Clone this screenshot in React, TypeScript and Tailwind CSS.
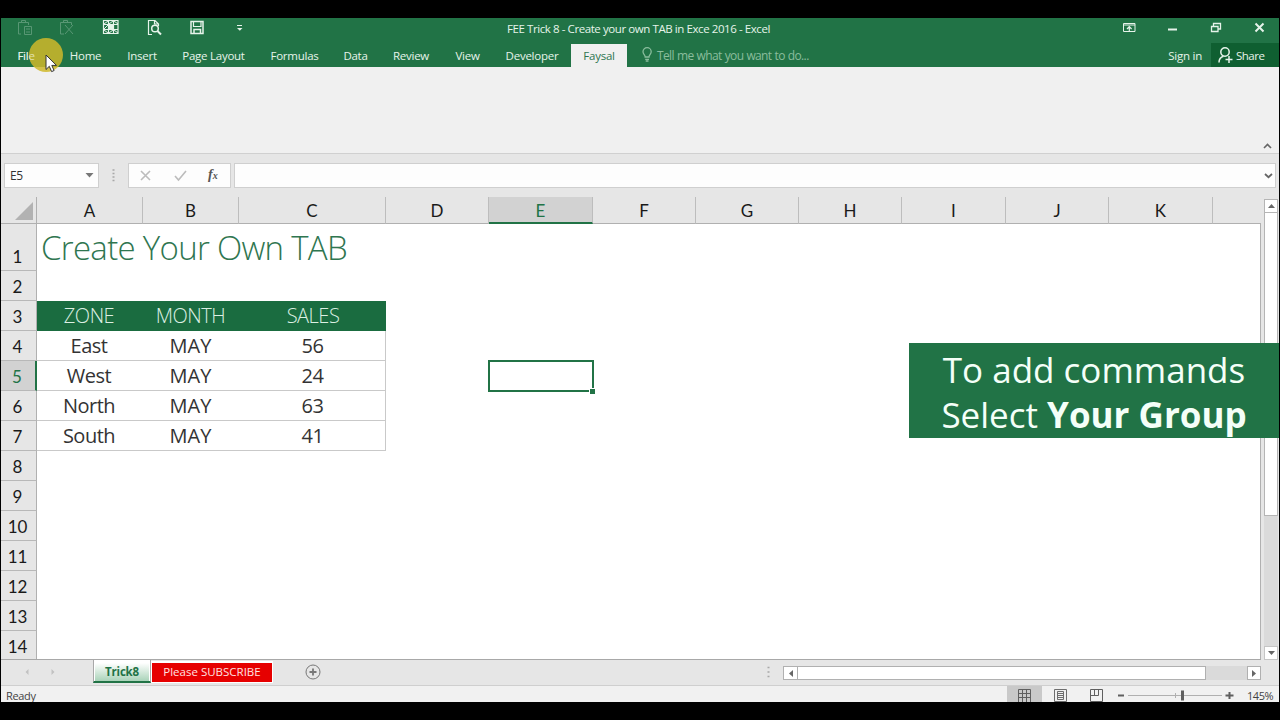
import { clsx } from "clsx";

const tabs = [
  { name: "Home", className: "w-[59px]" },
  { name: "Insert", className: "w-[54px]" },
  { name: "Page Layout", className: "w-[89px]" },
  { name: "Formulas", className: "w-[73px]" },
  { name: "Data", className: "w-[49px]" },
  { name: "Review", className: "w-[62px]" },
  { name: "View", className: "w-[51px]" },
  { name: "Developer", className: "w-[78px]" },
];

const columns = [
  { name: "A", className: "w-[106px]" },
  { name: "B", className: "w-[96px]" },
  { name: "C", className: "w-[147px]" },
  { name: "D", className: "w-[103px]" },
  { name: "E", className: "w-[104px]" },
  { name: "F", className: "w-[103px]" },
  { name: "G", className: "w-[103px]" },
  { name: "H", className: "w-[103px]" },
  { name: "I", className: "w-[104px]" },
  { name: "J", className: "w-[103px]" },
  { name: "K", className: "w-[104px]" },
];

const sales = [
  ["East", "MAY", "56"],
  ["West", "MAY", "24"],
  ["North", "MAY", "63"],
  ["South", "MAY", "41"],
];

function TitleBar() {
  return (
    <div className="relative flex h-[25px] shrink-0 items-start text-[#e6f3ea]">
      <svg width="260" height="25" viewBox="1 18 260 25" fill="none" stroke="currentColor">
        <g opacity="0.28">
          <path d="M21 34h-2.500V22.500h10V25M21.500 22.500v-2h4v2M24.500 26.500h7v8h-7z M26 29h4M26 32h4" />
          <path d="M64 34h-3.500V22.500h11V25M63.500 22.500v-2h4v2M65 25l8 9M73 25l-8 9" />
        </g>
        <path d="M103.500 20.500h14.500v13h-14.500zM103.500 24.500h14.500M103.500 29.500h14.500M108.500 20.500v13M113.500 20.500v13" strokeWidth="1.200" />
        <path d="M104 24l4-3M109 24l4-3M114 21l4 3M104 29l4-4M104 30l4 3M109 33l4-3M114 30l4 3" />
        <path d="M109 25h4.500v4H109z" fill="currentColor" />
        <path d="M152 34.500h-3.500v-14h6.500l3.500 3.500v2M154.500 20.500v3.500h4" strokeWidth="1.200" />
        <circle cx="155" cy="28.500" r="3.300" strokeWidth="1.500" />
        <path d="M157.500 31l3.500 3.500" strokeWidth="2" />
        <path d="M191 21.500h12v12h-12z" strokeWidth="1.500" />
        <path d="M193.500 22v4.500h7.500V22" strokeWidth="1.200" />
        <path d="M194 33.500v-4h6.500v4" strokeWidth="1.500" />
        <path d="M237 25.500h5" />
        <path d="M237 28h5.500l-2.700 2.800z" fill="currentColor" stroke="none" />
      </svg>
      <div className="w-[755px] pt-[3px] text-center text-[11.5px] leading-4 tracking-[-0.42px]">
        FEE Trick 8 - Create your own TAB in Exce 2016 - Excel
      </div>
      <svg className="ml-auto" width="160" height="25" viewBox="1119 18 160 25" fill="none" stroke="currentColor">
        <path d="M1123.500 23.500h11.500v8h-11.500zM1123.500 25h11.500" />
        <path d="M1129.300 31v-4M1127 29l2.300-2.300 2.300 2.300" strokeWidth="1.200" />
        <path d="M1168 29.500h9" strokeWidth="2" />
        <path d="M1211.500 26.500h6.500v5h-6.500zM1213.500 26v-2.500h7v5.500h-2.500" strokeWidth="1.300" />
        <path d="M1255.500 23.500l8 8M1263.500 23.500l-8 8" strokeWidth="2" />
      </svg>
    </div>
  );
}

function RibbonTabs() {
  return (
    <div className="relative flex h-[24px] shrink-0 text-[11.5px] leading-[25px] tracking-[-0.25px] text-[#e6f3ea]">
      <div className="mr-[5px] w-[50px] text-center">File</div>
      {tabs.map((tab) => (
        <div key={tab.name} className={clsx("whitespace-nowrap text-center", tab.className)}>
          {tab.name}
        </div>
      ))}
      <div className="mt-px h-[23px] w-[56px] bg-[#f0f0f0] text-center leading-[23px] text-[#2e7650]">Faysal</div>
      <svg className="ml-[13px] mt-[4px]" width="14" height="16" viewBox="0 0 14 16" fill="none" stroke="#8abd9d" strokeWidth="1.300">
        <path d="M5.200 10c0-2-2.200-2.700-2.200-5.200a4.100 4.100 0 0 1 8.200 0C11.200 7.300 9 8 9 10zM5.200 12.300H9M5.700 14h2.800" />
      </svg>
      <div className="ml-[3px] whitespace-nowrap tracking-[-0.62px] text-[#8abd9d] [word-spacing:0.5px] text-[12px]">Tell me what you want to do...</div>
      <div className="ml-auto mr-[9px]">Sign in</div>
      <div className="flex w-[68px] bg-[#0f5f31] pl-[7px] tracking-[-0.5px]">
        <svg className="mr-[3px] mt-[4px]" width="15" height="17" viewBox="0 0 15 17" fill="none" stroke="currentColor" strokeWidth="1.500">
          <circle cx="7" cy="5" r="4.200" />
          <path d="M1 15.500c0-3.500 2-5.500 4.500-6.300M7.500 12.500h7M11 9v7" />
        </svg>
        Share
      </div>
      {/* click highlight and pointer */}
      <div className="absolute left-[28px] top-[-5px] h-[34px] w-[34px] rounded-full bg-[#cfb92a]/85" />
      <div className="absolute left-0 top-0 w-[50px] text-center text-[#e6f3ea]/60">File</div>
      <svg className="absolute left-[44px] top-[11px]" width="14" height="20" viewBox="0 0 14 20">
        <path d="M1 1v14.500l3.300-3.200 2.300 5.300 2.500-1.100-2.300-5.100h4.700z" fill="#fff" stroke="#333" />
      </svg>
    </div>
  );
}

function FormulaBar() {
  return (
    <div className="flex h-[43px] shrink-0 bg-[#e6e6e6] pl-[3px] pt-[9px] text-[12px] text-[#333]">
      <div className="flex h-[25px] w-[95px] items-center justify-between border border-[#cfcfcf] bg-[#fdfdfd] pl-[5px] pr-[4px]">
        <span className="pt-px tracking-[-0.3px]">E5</span>
        <svg width="9" height="5" viewBox="0 0 9 5">
          <path d="M0.500 0h8L4.500 4.500z" fill="#777" />
        </svg>
      </div>
      <svg className="mx-[13px] mt-[6px]" width="3" height="13" viewBox="0 0 3 13">
        <path d="M0.500 1h2M0.500 4.500h2M0.500 8h2M0.500 11.500h2" stroke="#a8a8a8" strokeWidth="1.500" />
      </svg>
      <div className="flex h-[25px] w-[103px] border border-[#cfcfcf] bg-[#fdfdfd]">
        <svg width="75" height="23" viewBox="0 0 75 23" fill="none" stroke="#bcbcbc" strokeWidth="1.600">
          <path d="M12 7l9 9M21 7l-9 9M46 12l3.500 4L57 7" />
        </svg>
        <span className="ml-[4px] font-['Liberation_Serif',serif] text-[14px] font-bold italic leading-[22px] text-[#555]">
          f<span className="text-[10px]">x</span>
        </span>
      </div>
      <div className="ml-[3px] flex h-[25px] w-[1042px] items-center justify-end border border-[#cfcfcf] bg-[#fdfdfd] pr-[2px]">
        <svg width="9" height="6" viewBox="0 0 9 6" fill="none" stroke="#666" strokeWidth="1.800">
          <path d="M1 1l3.500 3.200L8 1" />
        </svg>
      </div>
    </div>
  );
}

function ColumnHeaders() {
  return (
    <div className="flex h-[27px] bg-[#e6e6e6] font-['Lato',sans-serif] text-[17px] leading-[28px] text-[#1a1a1a]">
      <div className="flex w-[36px] items-end justify-end border-b border-r border-[#b0b0b0] pb-[3px] pr-[3px]">
        <svg width="18" height="18" viewBox="0 0 18 18">
          <path d="M18 0v18H0z" fill="#b2b2b2" />
        </svg>
      </div>
      {columns.map((col) => (
        <div
          key={col.name}
          className={clsx(
            "border-r text-center",
            col.className,
            col.name === "E"
              ? "border-b-2 border-b-[#217346] border-r-[#bdbdbd] bg-[#d2d2d2] text-[#217346]"
              : "border-b border-b-[#b0b0b0] border-r-[#bdbdbd]"
          )}
        >
          {col.name}
        </div>
      ))}
      <div className="grow border-b border-[#b0b0b0]" />
    </div>
  );
}

function RowHeader({ row }: { row: number }) {
  return (
    <div
      className={clsx(
        "flex w-[36px] shrink-0 justify-center border-b border-[#b8b8b8] pr-[2px] font-['Lato',sans-serif] text-[17px]",
        row === 1 ? "items-end pb-[2px] leading-[22px]" : "items-center pt-[2px]",
        row === 5
          ? "border-r-2 border-r-[#217346] bg-[#d2d2d2] text-[#217346]"
          : "border-r border-r-[#b0b0b0] bg-[#e6e6e6] text-[#1a1a1a]"
      )}
    >
      {row}
    </div>
  );
}

function RowCells({ row }: { row: number }) {
  if (row === 1) {
    return (
      <div className="pl-[4px] text-[33px] font-light leading-[47px] tracking-[-0.7px] text-[#2f7650]">
        Create Your Own TAB
      </div>
    );
  }
  if (row === 3) {
    return (
      <div className="flex bg-[#1a6c40] text-[20px] font-light leading-[30px] tracking-[-0.5px] text-[#dcefe3]">
        <div className="w-[104px] text-center">ZONE</div>
        <div className="w-[99px] text-center">MONTH</div>
        <div className="w-[146px] text-center">SALES</div>
      </div>
    );
  }
  if (row >= 4 && row <= 7) {
    const [zone, month, amount] = sales[row - 4];
    return (
      <>
        <div className="flex border-b border-r border-[#c9c9c9] text-[20px] leading-[30px] text-[#333]">
          <div className="w-[104px] text-center tracking-[-0.5px]">{zone}</div>
          <div className="w-[99px] text-center">{month}</div>
          <div className="w-[145px] text-center tracking-[-0.5px]">{amount}</div>
        </div>
        {row === 5 && (
          <div className="relative ml-[103px] w-[104px]">
            <div className="absolute -left-px -top-px h-[32px] w-[106px] border-2 border-[#217346]" />
            <div className="absolute -right-[2px] top-[27px] h-[6px] w-[6px] border-l border-t border-white bg-[#217346]" />
          </div>
        )}
      </>
    );
  }
  return null;
}

function Sheet() {
  return (
    <div className="flex h-[463px] shrink-0 bg-[#e6e6e6]">
      <div className="flex w-[1260px] flex-col overflow-hidden border-b border-[#a8a8a8]">
        <ColumnHeaders />
        <div className="grow overflow-hidden border-r border-[#b0b0b0] bg-white">
          {Array.from({ length: 14 }, (_, i) => i + 1).map((row) => (
            <div key={row} className={clsx("flex", row === 1 ? "h-[47px]" : "h-[30px]")}>
              <RowHeader row={row} />
              <RowCells row={row} />
            </div>
          ))}
        </div>
      </div>
      <div className="ml-[3px] mt-[2px] flex h-[461px] w-[14px] flex-col bg-[#dadada]">
        <div className="flex h-[14px] items-center justify-center border border-[#b5b5b5] bg-white">
          <svg width="7" height="4" viewBox="0 0 7 4">
            <path d="M0 4h7L3.500 0z" fill="#666" />
          </svg>
        </div>
        <div className="h-[303px] border border-t-0 border-[#b5b5b5] bg-white" />
        <div className="mt-auto flex h-[14px] items-center justify-center border border-[#c5c5c5] bg-white">
          <svg width="7" height="4" viewBox="0 0 7 4">
            <path d="M0 0h7L3.500 4z" fill="#666" />
          </svg>
        </div>
      </div>
    </div>
  );
}

function SheetTabs() {
  return (
    <div className="flex h-[25px] shrink-0 bg-[#e6e6e6] text-[11.5px]">
      <svg width="92" height="25" viewBox="0 0 92 25" fill="#c2c2c2">
        <path d="M27.500 9v6l-3-3zM50.500 9v6l3-3z" />
      </svg>
      <div className="flex h-[23px] w-[58px] border-b-2 border-l border-r border-b-[#217346] border-l-[#a8a8a8] border-r-[#a8a8a8] bg-white px-px pt-[3px]">
        <div className="grow bg-linear-to-b from-white to-[#a9d3b9] text-center text-[11.5px] font-bold leading-[17px] tracking-[-0.2px] text-[#217346]">
          Trick8
        </div>
      </div>
      <div className="mt-px h-[22px] w-[122px] border border-t-2 border-white bg-[#e60000] text-center leading-[18px] text-[#ffe3e0]">
        Please SUBSCRIBE
      </div>
      <svg className="ml-[32px] mt-[4px]" width="16" height="16" viewBox="0 0 16 16" fill="none" stroke="#777">
        <circle cx="8" cy="8" r="7" />
        <path d="M4.500 8h7M8 4.500v7" strokeWidth="1.800" />
      </svg>
      <svg className="ml-auto mt-[6px]" width="3" height="12" viewBox="0 0 3 12">
        <path d="M0.500 1.500h2M0.500 6h2M0.500 10.500h2" stroke="#a8a8a8" strokeWidth="1.500" />
      </svg>
      <div className="ml-[13px] mr-[18px] mt-[6px] flex h-[14px] w-[478px] bg-[#dadada]">
        <div className="flex w-[14px] items-center justify-center border border-r-0 border-[#b0b0b0] bg-white">
          <svg width="4" height="7" viewBox="0 0 4 7">
            <path d="M4 0v7L0 3.500z" fill="#666" />
          </svg>
        </div>
        <div className="w-[409px] border border-[#b0b0b0] bg-white" />
        <div className="ml-auto flex w-[14px] items-center justify-center border border-[#b0b0b0] bg-white">
          <svg width="4" height="7" viewBox="0 0 4 7">
            <path d="M0 0v7l4-3.500z" fill="#666" />
          </svg>
        </div>
      </div>
    </div>
  );
}

function StatusBar() {
  return (
    <div className="flex h-[17px] shrink-0 overflow-hidden border-t border-[#cfcfcf] bg-[#f1f1f1] text-[11px] leading-[20px] text-[#444]">
      <span className="pl-[5px] tracking-[-0.35px]">Ready</span>
      <svg className="ml-auto" width="238" height="16" viewBox="1001 686 238 16" fill="none" stroke="#5f5f5f">
        <path d="M1007 686h35v16h-35z" fill="#c9c9c9" stroke="none" />
        <path d="M1018.500 689.500h12v13h-12zM1022.500 689.500v13M1026.500 689.500v13M1018.500 693.500h12M1018.500 697.500h12" />
        <path d="M1054.500 689.500h12v12h-12zM1057.500 691.500h6v8h-6zM1058 693.500h5M1058 695.500h5M1058 697.500h5" strokeWidth="0.900" />
        <path d="M1090.500 689.500h12v12h-12zM1094.500 689.500v6M1090.500 695.500h8v-6" />
        <path d="M1118 695.500h6" strokeWidth="2" />
        <path d="M1128 695.500h94M1175.500 693v5" stroke="#b0b0b0" />
        <path d="M1182.500 690.500v10" strokeWidth="3" />
        <path d="M1225.500 695.500h8M1229.500 692v7" strokeWidth="2" />
      </svg>
      <span className="ml-[8px] w-[32px] whitespace-nowrap tracking-[-0.45px]">145%</span>
    </div>
  );
}

export default function App() {
  return (
    <div className="relative h-[720px] w-[1280px] overflow-hidden bg-black px-px pt-[18px] font-['Open_Sans',sans-serif]">
      <div className="flex h-[684px] flex-col overflow-hidden">
        <div className="bg-[#217346]">
          <TitleBar />
          <RibbonTabs />
        </div>
        <div className="flex h-[87px] shrink-0 items-end justify-end border-b border-[#d0d0d0] bg-[#f0f0f0] pb-[4px] pr-[7px]">
          <svg width="9" height="6" viewBox="0 0 9 6" fill="none" stroke="#666" strokeWidth="1.600">
            <path d="M1 5l3.500-3.500L8 5" />
          </svg>
        </div>
        <FormulaBar />
        <Sheet />
        <SheetTabs />
        <StatusBar />
      </div>
      <div className="absolute left-[909px] top-[343px] h-[95px] w-[370px] bg-[#217346] pt-[4px] text-center text-[35px] leading-[45px] text-[#f4fff8]">
        <div>To add commands</div>
        <div>
          Select <b>Your Group</b>
        </div>
      </div>
    </div>
  );
}
